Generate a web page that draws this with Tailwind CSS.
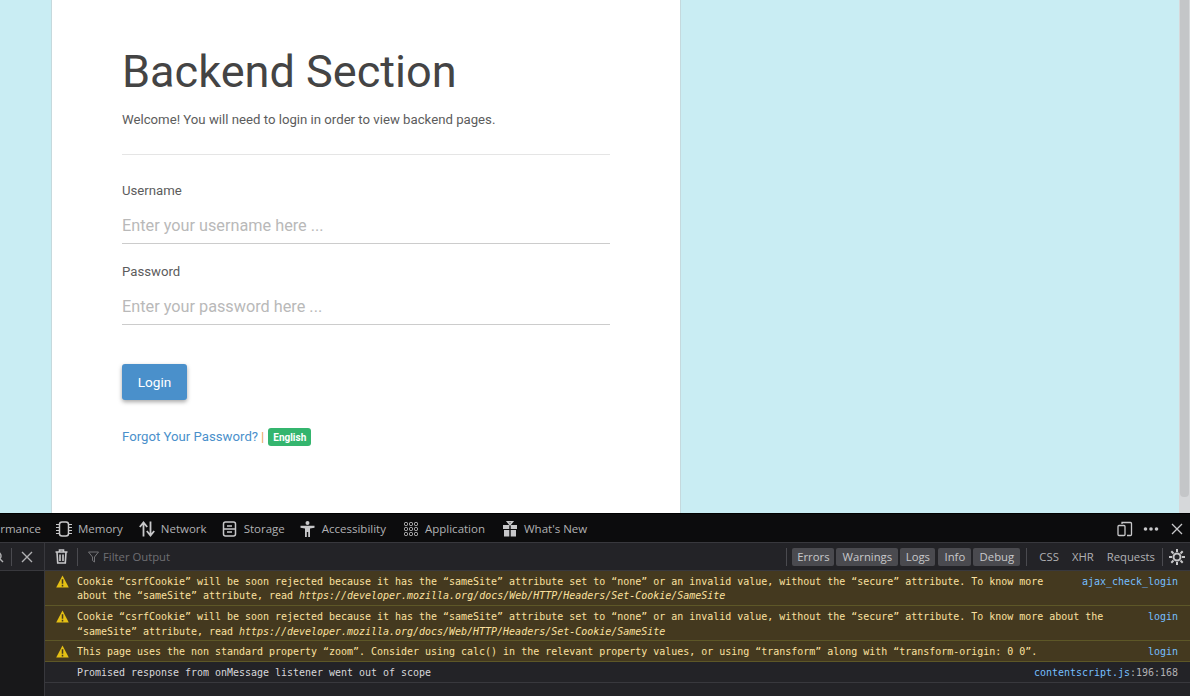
<!DOCTYPE html>
<html lang="en">
<head>
    <meta charset="UTF-8">
    <title>Backend Section</title>
    <script src="https://cdn.jsdelivr.net/npm/@tailwindcss/browser@4"></script>
</head>
<body class="w-[1190px] h-[696px] overflow-hidden flex flex-col bg-[#c9edf3] font-['Roboto',sans-serif]">
    <!-- page -->
    <div class="h-[513px] flex shrink-0 overflow-hidden">
        <div class="flex-1 flex">
            <main class="ml-[51px] w-[630px] h-full bg-white border-x border-[#c5d9dd] pl-[70px] pr-[70px] pt-[43px]">
                <h1 class="text-[45.100px] leading-[58px] text-[#444]">Backend Section</h1>
                <p class="mt-[9px] text-[13.200px] leading-[20px] text-[#5c5c5c]">Welcome! You will need to login in order to view backend pages.</p>
                <hr class="mt-[24px] border-t border-[#e5e5e5]">
                <label class="block mt-[27px] text-[13.200px] leading-[18px] text-[#5c5c5c]">Username</label>
                <div class="mt-[9px] h-[35px] border-b border-[#ccc] text-[16.250px] leading-[34px] text-[#b9b9b9]">Enter your username here ...</div>
                <label class="block mt-[19px] text-[13.200px] leading-[18px] text-[#5c5c5c]">Password</label>
                <div class="mt-[9px] h-[35px] border-b border-[#ccc] text-[16.250px] leading-[34px] text-[#b9b9b9]">Enter your password here ...</div>
                <button class="block mt-[39px] w-[65px] h-[36px] pt-[1px] rounded-[3px] bg-[#4a90cb] text-white text-[13.600px] shadow-[0_2px_4px_rgba(0,0,0,0.35)]">Login</button>
                <div class="mt-[28px] flex items-center text-[13.200px] leading-[18px] text-[#4a90cb]">
                    <a href="#">Forgot Your Password?</a>
                    <span class="ml-[3px] text-[#e8a25f]">|</span>
                    <span class="ml-[4px] px-[5px] h-[18px] rounded-[3px] bg-[#34b56e] text-white text-[10px] font-bold leading-[19px]">English</span>
                </div>
            </main>
        </div>
        <div class="w-[11px] bg-[#d6d8da] flex justify-center">
            <div class="w-[9px] h-[497px] bg-[#c4c6c8] rounded-b-[4px]"></div>
        </div>
    </div>

    <!-- devtools -->
    <div class="flex-1 flex flex-col bg-[#232327] font-['Open_Sans',sans-serif]">
        <div class="h-[30px] pt-[1px] bg-[#0c0c0d] border-t border-[#000] border-b border-b-[#38383d] flex items-center text-[11.500px] text-[#b1b1b3] overflow-hidden shrink-0">
            <span class="w-[41px] shrink-0 overflow-hidden whitespace-nowrap flex justify-end">rmance</span>
            <div class="ml-[15px] flex items-center gap-[6px] shrink-0">
                <svg width="16" height="16" viewBox="0 0 16 16" fill="none" stroke="#c8c8ca" stroke-width="1.5"><rect x="3.5" y="1" width="9" height="14" rx="2.5"/><path d="M0 3.500h3M0 6.500h3M0 9.500h3M0 12.500h3M13 3.500h3M13 6.500h3M13 9.500h3M13 12.500h3" stroke-width="1"/></svg>
                <span>Memory</span>
            </div>
            <div class="ml-[16px] flex items-center gap-[6px] shrink-0">
                <svg width="16" height="16" viewBox="0 0 16 16" fill="none" stroke="#c8c8ca" stroke-width="1.800"><path d="M4.500 15.500V2M0.800 6l3.700-4.500L8.200 6M11.500 0.500V14M7.800 10l3.700 4.500 3.700-4.500"/></svg>
                <span>Network</span>
            </div>
            <div class="ml-[15px] flex items-center gap-[7px] shrink-0">
                <svg width="15" height="16" viewBox="0 0 15 16" fill="none" stroke="#c8c8ca" stroke-width="1.5"><rect x="1.500" y="1" width="12" height="14" rx="2"/><path d="M1.500 8h12M5 5h5M5 11h5"/></svg>
                <span>Storage</span>
            </div>
            <div class="ml-[15px] flex items-center gap-[7px] shrink-0">
                <svg width="15" height="16" viewBox="0 0 15 16" fill="#c8c8ca"><circle cx="7.500" cy="2" r="2"/><path d="M0.500 4.800h14v2L10 7.500V16H8.200v-5H6.800v5H5V7.500L0.500 6.800z"/></svg>
                <span>Accessibility</span>
            </div>
            <div class="ml-[18px] flex items-center gap-[7px] shrink-0">
                <svg width="14" height="14" viewBox="0 0 14 14" fill="none" stroke="#c8c8ca" stroke-width="1"><rect x="0.500" y="0.500" width="3" height="3" rx="1"/><rect x="5.500" y="0.500" width="3" height="3" rx="1"/><rect x="10.500" y="0.500" width="3" height="3" rx="1"/><rect x="0.500" y="5.500" width="3" height="3" rx="1"/><rect x="5.500" y="5.500" width="3" height="3" rx="1"/><rect x="10.500" y="5.500" width="3" height="3" rx="1"/><rect x="0.500" y="10.500" width="3" height="3" rx="1"/><rect x="5.500" y="10.500" width="3" height="3" rx="1"/><rect x="10.500" y="10.500" width="3" height="3" rx="1"/></svg>
                <span>Application</span>
            </div>
            <div class="ml-[18px] flex items-center gap-[7px] shrink-0">
                <svg width="14" height="16" viewBox="0 0 14 16" fill="#c8c8ca"><path d="M0 4h6.300v4H0zM7.700 4H14v4H7.700zM1 9h5.300v6.500H1zM7.700 9H13v6.500H7.700z"/><path d="M7 3.800 4.500 0.800h5z" fill="none" stroke="#c8c8ca" stroke-width="1.500"/></svg>
                <span>What's New</span>
            </div>
            <div class="ml-auto flex items-center shrink-0 pr-[7px]">
                <svg width="16" height="16" viewBox="0 0 16 16" fill="none" stroke="#c8c8ca" stroke-width="1.300"><path d="M5 3V1.500h8.500a1 1 0 0 1 1 1v11a1 1 0 0 1-1 1H10"/><rect x="1" y="4.500" width="7" height="10" rx="1"/></svg>
                <svg class="ml-[10px]" width="16" height="6" viewBox="0 0 16 6" fill="#c8c8ca"><circle cx="2.500" cy="3" r="1.800"/><circle cx="8" cy="3" r="1.800"/><circle cx="13.500" cy="3" r="1.800"/></svg>
                <svg class="ml-[12px]" width="12" height="12" viewBox="0 0 12 12" fill="none" stroke="#c8c8ca" stroke-width="1.300"><path d="M1 1l10 10M11 1 1 11"/></svg>
            </div>
        </div>

        <div class="flex-1 flex min-h-0">
            <!-- sidebar -->
            <div class="w-[45px] shrink-0 border-r border-[#38383d] bg-[#18181a]">
                <div class="h-[28px] bg-[#232327] border-b border-[#38383d] flex items-center">
                    <svg class="-ml-[4px]" width="8" height="12" viewBox="0 0 8 12" fill="none" stroke="#b1b1b3" stroke-width="1.500"><circle cx="1" cy="5" r="4"/><path d="M4 8l3 3"/></svg>
                    <div class="ml-[7px] w-px h-[18px] bg-[#4a4a4f]"></div>
                    <svg class="ml-[9px]" width="12" height="12" viewBox="0 0 12 12" fill="none" stroke="#b1b1b3" stroke-width="1.400"><path d="M1 1l10 10M11 1 1 11"/></svg>
                </div>
            </div>
            <div class="flex-1 flex flex-col min-w-0">
                <!-- filter bar -->
                <div class="h-[28px] shrink-0 flex items-center border-b border-[#38383d] text-[11.300px] text-[#b1b1b3]">
                    <svg class="ml-[10px]" width="13" height="15" viewBox="0 0 13 15" fill="none" stroke="#c8c8ca" stroke-width="1.600"><path d="M0.500 3h12M4.500 3V1h4v2M2 3l.7 11h7.600L11 3M5 5.500v6.500M8 5.500v6.500"/></svg>
                    <div class="ml-[9px] w-px h-[18px] bg-[#4a4a4f]"></div>
                    <svg class="ml-[10px]" width="11" height="12" viewBox="0 0 11 12" fill="none" stroke="#737377" stroke-width="1"><path d="M0.500 1h10L6.500 6v5l-2-1.500V6z"/></svg>
                    <span class="ml-[4px] pt-[2px] text-[#6f6f73]">Filter Output</span>
                    <div class="ml-auto w-px h-[18px] bg-[#4a4a4f]"></div>
                    <div class="ml-[5px] flex text-center">
                        <span class="w-[42px] h-[18px] leading-[18px] rounded-[2px] bg-[#4a4a4f] text-[#c8c8ca]">Errors</span>
                        <span class="ml-[2px] w-[62px] h-[18px] leading-[18px] rounded-[2px] bg-[#4a4a4f] text-[#c8c8ca]">Warnings</span>
                        <span class="ml-[2px] w-[35px] h-[18px] leading-[18px] rounded-[2px] bg-[#4a4a4f] text-[#c8c8ca]">Logs</span>
                        <span class="ml-[3px] w-[33px] h-[18px] leading-[18px] rounded-[2px] bg-[#4a4a4f] text-[#c8c8ca]">Info</span>
                        <span class="ml-[2px] w-[47px] h-[18px] leading-[18px] rounded-[2px] bg-[#4a4a4f] text-[#c8c8ca]">Debug</span>
                    </div>
                    <div class="ml-[6px] w-px h-[18px] bg-[#4a4a4f]"></div>
                    <span class="ml-[12px] pt-[2px]">CSS</span>
                    <span class="ml-[13px] pt-[2px]">XHR</span>
                    <span class="ml-[13px] pt-[2px]">Requests</span>
                    <div class="ml-[7px] w-px h-[18px] bg-[#4a4a4f]"></div>
                    <svg class="ml-[6px] mr-[5px]" width="16" height="16" viewBox="0 0 16 16" fill="none" stroke="#c8c8ca"><circle cx="8" cy="8" r="3.500" stroke-width="2"/><path d="M8 0v3M8 13v3M0 8h3M13 8h3M2.300 2.300l2.200 2.200M11.500 11.500l2.200 2.200M13.700 2.300l-2.200 2.200M4.500 11.500l-2.200 2.200" stroke-width="2"/></svg>
                </div>

                <!-- messages -->
                <div class="font-['DejaVu_Sans_Mono',monospace] text-[9.970px] leading-[14px]">
                    <div class="h-[35px] flex bg-[#44391f] border-b border-[#5d5727] text-[#fce19f] pt-[4px]">
                        <svg class="ml-[11px] shrink-0" width="13" height="13" viewBox="0 0 12 12"><path d="M6 0.500 11.800 11.500H0.200z" fill="#e5c014"/><path d="M6 4v4M6 9v1.500" stroke="#44391f" stroke-width="1.400"/></svg>
                        <p class="ml-[8px] w-[980px] shrink-0">Cookie “csrfCookie” will be soon rejected because it has the “sameSite” attribute set to “none” or an invalid value, without the “secure” attribute. To know more about the “sameSite” attribute, read <i>https://developer.mozilla.org/docs/Web/HTTP/Headers/Set-Cookie/SameSite</i></p>
                        <a class="ml-auto pr-[12px] text-[#75bfff]">ajax_check_login</a>
                    </div>
                    <div class="h-[35px] flex bg-[#44391f] border-b border-[#5d5727] text-[#fce19f] pt-[4px]">
                        <svg class="ml-[11px] shrink-0" width="13" height="13" viewBox="0 0 12 12"><path d="M6 0.500 11.800 11.500H0.200z" fill="#e5c014"/><path d="M6 4v4M6 9v1.500" stroke="#44391f" stroke-width="1.400"/></svg>
                        <p class="ml-[8px] -mt-[1px] w-[1040px] shrink-0 leading-[15px]">Cookie “csrfCookie” will be soon rejected because it has the “sameSite” attribute set to “none” or an invalid value, without the “secure” attribute. To know more about the “sameSite” attribute, read <i>https://developer.mozilla.org/docs/Web/HTTP/Headers/Set-Cookie/SameSite</i></p>
                        <a class="ml-auto pr-[12px] text-[#75bfff]">login</a>
                    </div>
                    <div class="h-[21px] flex bg-[#44391f] border-b border-[#5d5727] text-[#fce19f] pt-[4px]">
                        <svg class="ml-[11px] shrink-0" width="13" height="13" viewBox="0 0 12 12"><path d="M6 0.500 11.800 11.500H0.200z" fill="#e5c014"/><path d="M6 4v4M6 9v1.500" stroke="#44391f" stroke-width="1.400"/></svg>
                        <p class="ml-[8px] whitespace-nowrap">This page uses the non standard property “zoom”. Consider using calc() in the relevant property values, or using “transform” along with “transform-origin: 0 0”.</p>
                        <a class="ml-auto pr-[12px] text-[#75bfff]">login</a>
                    </div>
                    <div class="h-[21px] flex border-b border-[#38383d] text-[#d7d7db] pt-[4px] pl-[32px]">
                        <p>Promised response from onMessage listener went out of scope</p>
                        <a class="ml-auto pr-[12px] text-[#75bfff]">contentscript.js<span class="text-[#b1b1b3]">:196:168</span></a>
                    </div>
                </div>
            </div>
        </div>
    </div>
</body>
</html>
